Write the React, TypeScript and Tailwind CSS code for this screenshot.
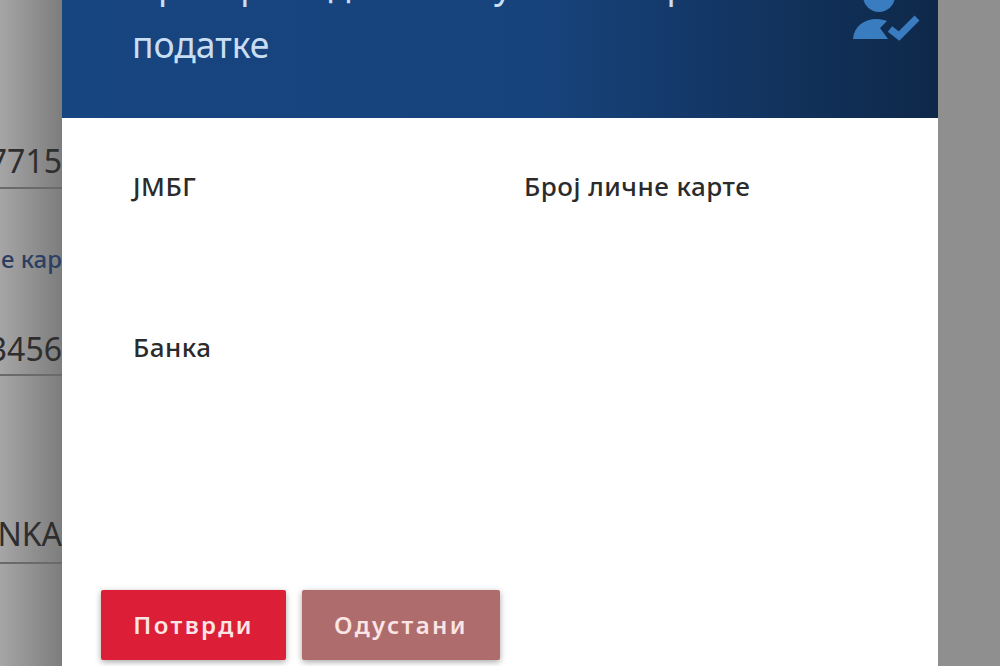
const font = { fontFamily: '"Noto Sans", "Open Sans", sans-serif' };

function Row({ text, blue }: { text: string; blue?: boolean }) {
  return (
    <div className="flex justify-end whitespace-nowrap">
      <span className={blue ? "text-[24px] font-medium text-[#2c3f63]" : "text-[32px] text-[#2e2e2e]"}>{text}</span>
    </div>
  );
}

export default function App() {
  return (
    <div style={font} className="relative h-[666px] w-[1000px] overflow-hidden bg-[#8f8f8f]">
      {/* dimmed page behind the dialog */}
      <div className="flex h-full w-[62px] flex-col overflow-hidden bg-gradient-to-r from-[#a6a6a6] to-[#7d7d7d]">
        <div className="flex h-[189px] shrink-0 items-end justify-end border-b-2 border-[#6a6a6a] pb-[6px] leading-[40px]">
          <Row text="7715" />
        </div>
        <div className="flex h-[92px] shrink-0 items-end justify-end pb-[4px]">
          <Row text="е кар" blue />
        </div>
        <div className="flex h-[95px] shrink-0 items-end justify-end border-b-2 border-[#6a6a6a] pb-[5px] leading-[40px]">
          <Row text="3456" />
        </div>
        <div className="flex h-[188px] shrink-0 items-end justify-end border-b-2 border-[#6a6a6a] pb-[8px] leading-[40px]">
          <Row text="NKA" />
        </div>
      </div>

      {/* dialog */}
      <div className="absolute left-[62px] top-0 flex h-full w-[876px] flex-col bg-white">
        <div className="flex h-[118px] shrink-0 justify-between overflow-hidden bg-gradient-to-r from-[#17457f] via-[#17437c] via-55% to-[#0e2849] pl-[71px] pr-[18px]">
          <h2 className="-mt-[46px] -ml-px h-[120px] w-[660px] text-[35.5px] font-normal leading-[60px] text-[#c9def2]">
            Проверите да ли сте унели исправне податке
          </h2>
          <svg width="68" height="42" viewBox="0 0 68 42" className="shrink-0">
            <circle cx="27" cy="-4" r="16" fill="#3a7cc0" />
            <path d="M1 39 C2 27 11 19 25 19 C29 19 32 20 35 21 L28 28 L36 39 Z" fill="#3a7cc0" />
            <path d="M38 29 L47 36 L65 18" fill="none" stroke="#3a7cc0" strokeWidth="7" />
          </svg>
        </div>

        <div className="grid grid-cols-[391px_1fr] pl-[71px] pt-[53px]">
          <div className="text-[26px] font-medium leading-[30px] tracking-[0.5px] text-[#2b2b2b]">JМБГ</div>
          <div className="text-[26px] font-medium leading-[30px] tracking-[0.5px] text-[#2b2b2b]">Број личне карте</div>
          <div className="col-span-2 mt-[131px] text-[26px] font-medium leading-[30px] tracking-[0.5px] text-[#2b2b2b]">Банка</div>
        </div>

        <div className="mt-[228px] flex gap-4 pl-[39px]">
          <button className="h-[70px] w-[185px] rounded-[2px] bg-[#dc1f37] text-[24px] font-semibold tracking-[2.4px] text-[#fbe4e4] shadow-[0_2px_6px_rgba(0,0,0,0.35)]">
            Потврди
          </button>
          <button className="h-[70px] w-[198px] rounded-[2px] bg-[#ae6c6c] text-[24px] font-semibold tracking-[2.4px] text-[#fbe4e4] shadow-[0_2px_6px_rgba(0,0,0,0.35)]">
            Одустани
          </button>
        </div>
      </div>
    </div>
  );
}
